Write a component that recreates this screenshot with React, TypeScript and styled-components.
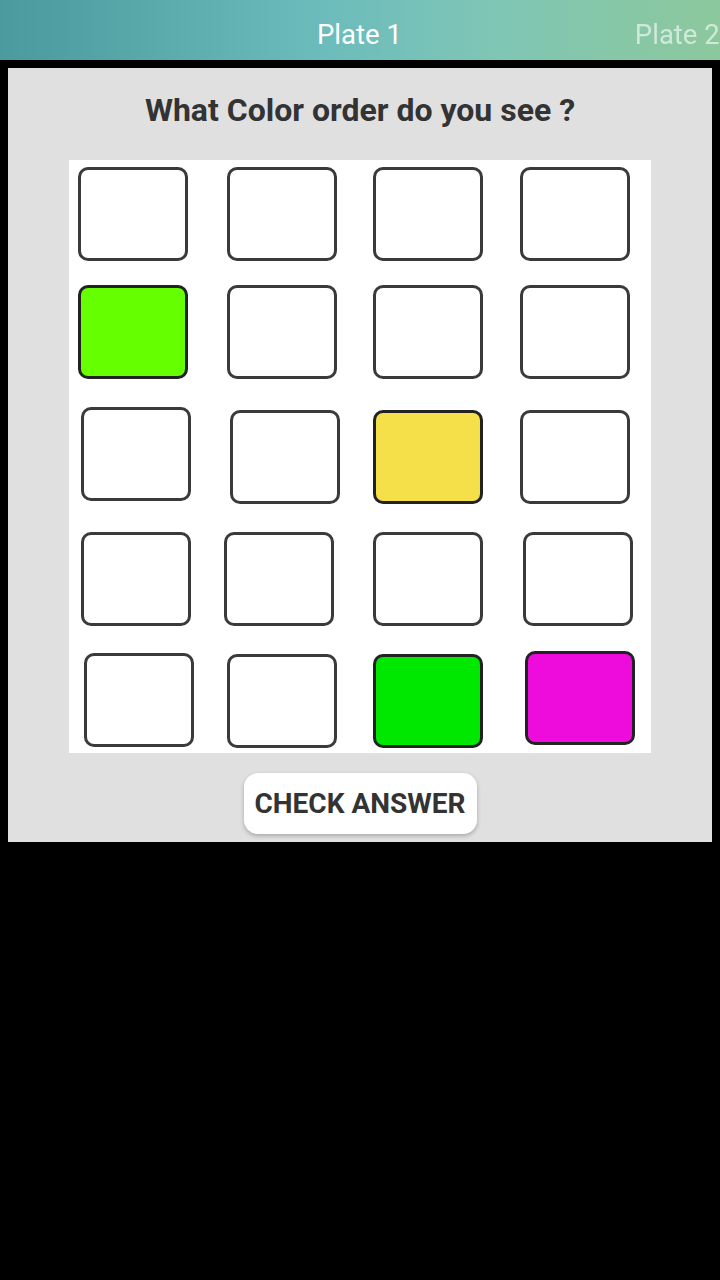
import React from "react";
import styled, { createGlobalStyle } from "styled-components";

const Global = createGlobalStyle`
  html, body { margin: 0; padding: 0; background: #000; }
  body { font-family: Roboto, "Noto Sans", Arial, sans-serif; }
`;

const Page = styled.div`
  width: 720px;
  min-height: 1280px;
  background: #000;
  display: flex;
  flex-direction: column;
`;

const TabBar = styled.div`
  box-sizing: border-box;
  height: 60px;
  background: linear-gradient(90deg, #4a9a9e 0%, #6cbcbc 45%, #80c6b4 70%, #8cc89c 100%);
  display: flex;
  align-items: flex-start;
  padding: 15px 0 0 317px;
  gap: 233px;
  overflow: hidden;
  white-space: nowrap;
`;

const Tab = styled.span<{ $active?: boolean }>`
  font-family: Roboto, Arial, sans-serif;
  font-size: 27.5px;
  color: #fff;
  opacity: ${(p) => (p.$active ? 1 : 0.6)};
  line-height: 40px;
`;

const Card = styled.div`
  margin: 8px 8px 0;
  background: #e0e0e0;
  display: flex;
  flex-direction: column;
  align-items: center;
  padding: 23px 0 8px;
`;

const Title = styled.h1`
  margin: 0;
  font-family: Roboto, Arial, sans-serif;
  font-weight: 700;
  font-size: 32px;
  line-height: 38px;
  color: #333;
`;

const Plate = styled.div`
  margin-top: 31px;
  width: 582px;
  height: 593px;
  box-sizing: border-box;
  background: #fff;
  padding: 7px 0 0 9px;
  display: grid;
  grid-template-columns: repeat(4, 110px);
  grid-auto-rows: 94px;
  column-gap: 37px;
  row-gap: 27px;
`;

const Swatch = styled.div<{ $fill: string; $dx: number; $dy: number }>`
  box-sizing: border-box;
  width: 110px;
  height: 94px;
  border-radius: 10px;
  border: 3px solid ${(p) => (p.$fill === "#fff" ? "#3a3a3a" : "#222")};
  background: ${(p) => p.$fill};
  transform: translate(${(p) => p.$dx}px, ${(p) => p.$dy}px);
  filter: blur(0.3px);
`;

const CheckButton = styled.button`
  margin-top: 20px;
  width: 233px;
  height: 61px;
  border: none;
  border-radius: 14px;
  background: #fff;
  box-shadow: 0 2px 4px rgba(0, 0, 0, 0.25);
  font-family: Roboto, Arial, sans-serif;
  font-weight: 700;
  font-size: 28px;
  color: #333;
  padding: 0;
`;

const W = "#fff";
const cells: { fill: string; dx: number; dy: number }[] = [
  { fill: W, dx: 0, dy: 0 },
  { fill: W, dx: 2, dy: 0 },
  { fill: W, dx: 1, dy: 0 },
  { fill: W, dx: 1, dy: 0 },

  { fill: "#66ff00", dx: 0, dy: -3 },
  { fill: W, dx: 2, dy: -3 },
  { fill: W, dx: 1, dy: -3 },
  { fill: W, dx: 1, dy: -3 },

  { fill: W, dx: 3, dy: -2 },
  { fill: W, dx: 5, dy: 1 },
  { fill: "#f5e04a", dx: 1, dy: 1 },
  { fill: W, dx: 1, dy: 1 },

  { fill: W, dx: 3, dy: 2 },
  { fill: W, dx: -1, dy: 2 },
  { fill: W, dx: 1, dy: 2 },
  { fill: W, dx: 4, dy: 2 },

  { fill: W, dx: 6, dy: 2 },
  { fill: W, dx: 2, dy: 3 },
  { fill: "#00e800", dx: 1, dy: 3 },
  { fill: "#ee0cdc", dx: 6, dy: 0 },
];

export default function App() {
  return (
    <Page>
      <Global />
      <TabBar>
        <Tab $active>Plate 1</Tab>
        <Tab>Plate 2</Tab>
      </TabBar>
      <Card>
        <Title>What Color order do you see ?</Title>
        <Plate>
          {cells.map((c, i) => (
            <Swatch key={i} $fill={c.fill} $dx={c.dx} $dy={c.dy} />
          ))}
        </Plate>
        <CheckButton>CHECK ANSWER</CheckButton>
      </Card>
    </Page>
  );
}
